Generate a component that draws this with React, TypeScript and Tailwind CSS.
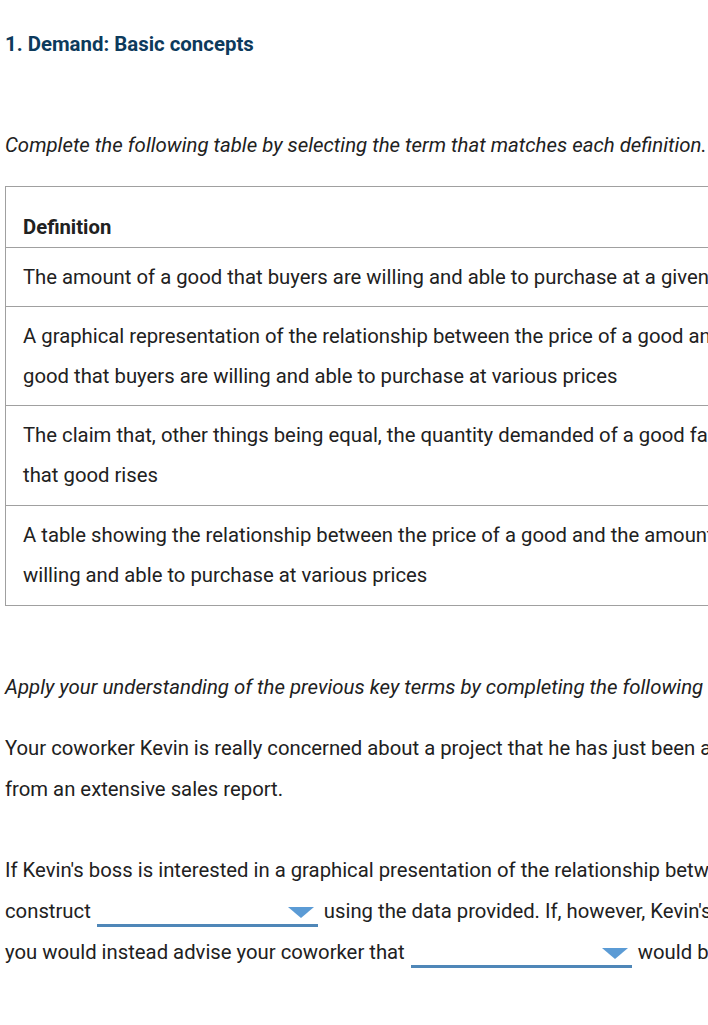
import React from 'react'

function Dropdown() {
  return (
    <span className="inline-flex items-start justify-end w-[221px] h-[20px] border-b-[3px] border-[#4f87b8] align-baseline mx-[6px] pr-[4px]">
      <svg width="26" height="11" viewBox="0 0 26 11">
        <polygon points="0,0 26,0 13,11" fill="#5b9bd5" />
      </svg>
    </span>
  )
}

const rows: string[][] = [
  ['The amount of a good that buyers are willing and able to purchase at a given price'],
  [
    'A graphical representation of the relationship between the price of a good and the quantity of that',
    'good that buyers are willing and able to purchase at various prices',
  ],
  [
    'The claim that, other things being equal, the quantity demanded of a good falls when the price of',
    'that good rises',
  ],
  [
    'A table showing the relationship between the price of a good and the amount of that good that buyers are',
    'willing and able to purchase at various prices',
  ],
]

export default function App() {
  return (
    <div
      className="w-full min-h-[1025px] overflow-hidden bg-white text-[#212121]"
      style={{ fontFamily: 'Roboto, "Liberation Sans", sans-serif' }}
    >
      <div className="w-[1100px] pl-[5px]">
        <h1 className="pt-[31px] text-[20.4px] leading-[26px] font-bold text-[#0d3a5c]">
          1. Demand: Basic concepts
        </h1>

        <p className="mt-[75px] text-[20.4px] leading-[26px] italic whitespace-nowrap">
          Complete the following table by selecting the term that matches each definition.
        </p>

        {/* Table */}
        <div className="mt-[28px] w-[1080px] border border-[#a0a0a0]">
          <div className="pt-[20px] pl-[17px] text-[20.3px] leading-[40px] font-bold">Definition</div>
          {rows.map((lines, i) => (
            <div
              key={i}
              className={`border-t border-[#a0a0a0] pl-[17px] pt-[9px] text-[20.3px] leading-[40px] whitespace-nowrap ${i < 2 ? 'pb-[9px]' : 'pb-[10px]'}`}
            >
              {lines.map((l, j) => (
                <div key={j}>{l}</div>
              ))}
            </div>
          ))}
        </div>

        <p className="mt-[68px] text-[20.4px] leading-[26px] italic whitespace-nowrap">
          Apply your understanding of the previous key terms by completing the following scenario.
        </p>

        <div className="mt-[28px] text-[20.3px] leading-[41px] whitespace-nowrap">
          <div>Your coworker Kevin is really concerned about a project that he has just been assigned. His boss wants him to analyze data</div>
          <div>from an extensive sales report.</div>
        </div>

        <div className="mt-[40px] text-[20.3px] leading-[41px] whitespace-nowrap">
          <div className="h-[41px]">If Kevin's boss is interested in a graphical presentation of the relationship between price and quantity demanded, Kevin should</div>
          <div className="h-[41px]">
            construct
            <Dropdown />
            using the data provided. If, however, Kevin's boss wants a tabular presentation of the data,
          </div>
          <div className="h-[41px]">
            you would instead advise your coworker that
            <Dropdown />
            would be more appropriate.
          </div>
        </div>
      </div>
    </div>
  )
}
